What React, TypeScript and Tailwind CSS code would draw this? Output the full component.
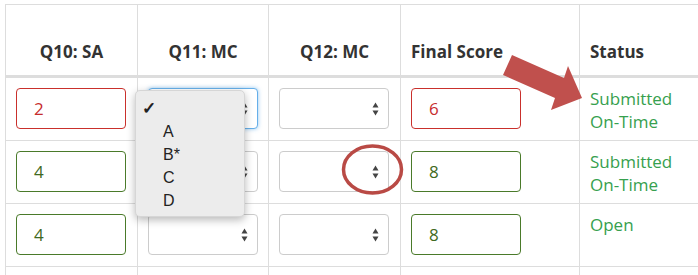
import React from 'react';

type Row = {
  q10: { value: string; tone: 'error' | 'ok' };
  q11Focused?: boolean;
  final: { value: string; tone: 'error' | 'ok' };
  status: string[];
};

const rows: Row[] = [
  { q10: { value: '2', tone: 'error' }, q11Focused: true, final: { value: '6', tone: 'error' }, status: ['Submitted', 'On-Time'] },
  { q10: { value: '4', tone: 'ok' }, final: { value: '8', tone: 'ok' }, status: ['Submitted', 'On-Time'] },
  { q10: { value: '4', tone: 'ok' }, final: { value: '8', tone: 'ok' }, status: ['Open'] },
];

function ScoreInput({ value, tone }: { value: string; tone: 'error' | 'ok' }) {
  const cls =
    tone === 'error'
      ? 'border-[#c9302c] text-[#c62d2d]'
      : 'border-[#4a7a2a] text-[#3f6a22]';
  return (
    <div className={`w-[110px] h-[41px] rounded-[4px] border bg-white flex items-center pl-[17px] text-[17px] ${cls}`}>
      {value}
    </div>
  );
}

function SelectArrows() {
  return (
    <svg width="7" height="14" viewBox="0 0 7 14" className="shrink-0">
      <path d="M3.5 0.5 L6.5 5.5 L0.5 5.5 Z" fill="#444" />
      <path d="M3.5 13.5 L6.5 8.5 L0.5 8.5 Z" fill="#444" />
    </svg>
  );
}

function FakeSelect({ focused }: { focused?: boolean }) {
  const cls = focused
    ? 'border-[#66afe9] shadow-[0_0_4px_rgba(102,175,233,0.7)]'
    : 'border-[#cccccc]';
  return (
    <div className={`w-[110px] h-[41px] rounded-[4px] border bg-white flex items-center justify-end pr-[9px] ${cls}`}>
      <SelectArrows />
    </div>
  );
}

function OptionMenu() {
  const items = ['', 'A', 'B*', 'C', 'D'];
  return (
    <div className="absolute left-[135px] top-[90px] w-[110px] h-[127px] rounded-[5px] bg-[#ececec] border border-[#d6d6d6] shadow-[0_3px_9px_rgba(0,0,0,0.28)] py-[6px] font-['Liberation_Sans',Arial,sans-serif] text-[16px] text-[#222]">
      {items.map((label, i) => (
        <div key={i} className="h-[23px] flex items-center">
          <span className="w-[27px] pl-[6px] text-[17px] font-bold leading-none">{i === 0 ? '✓' : ''}</span>
          <span>{label}</span>
        </div>
      ))}
    </div>
  );
}

function Annotations() {
  return (
    <svg className="absolute left-0 top-0 pointer-events-none" width="698" height="275" viewBox="0 0 698 275">
      <polygon
        points="512,55 564,78 568,66 582,98 551,110 555,98 503,75"
        fill="#c0504d"
      />
      <ellipse cx="372.5" cy="169.5" rx="29" ry="23.5" fill="none" stroke="#b94a45" strokeWidth="3.5" />
    </svg>
  );
}

const cellBase = 'border-r border-[#dddddd] px-[10px]';

export default function App() {
  return (
    <div className="relative w-[698px] h-[275px] overflow-hidden bg-white font-['Open_Sans',sans-serif]">
      <div className="pl-[5px] pt-[4px]">
        <div className="grid grid-cols-[132px_131px_132px_179px_160px] w-max border-l border-t border-[#dddddd]">
          {/* Header */}
          {['Q10: SA', 'Q11: MC', 'Q12: MC'].map(h => (
            <div key={h} className={`${cellBase} h-[73px] border-b-[3px] flex items-end justify-center pb-[12px] text-[17px] leading-[22px] font-bold text-[#333]`}>
              {h}
            </div>
          ))}
          {['Final Score', 'Status'].map(h => (
            <div key={h} className={`${cellBase} h-[73px] border-b-[3px] flex items-end pb-[12px] text-[17px] leading-[22px] font-bold text-[#333]`}>
              {h}
            </div>
          ))}

          {/* Body */}
          {rows.map((r, i) => (
            <React.Fragment key={i}>
              <div className={`${cellBase} h-[63px] border-b pt-[10px]`}>
                <ScoreInput {...r.q10} />
              </div>
              <div className={`${cellBase} h-[63px] border-b pt-[10px]`}>
                <FakeSelect focused={r.q11Focused} />
              </div>
              <div className={`${cellBase} h-[63px] border-b pt-[10px]`}>
                <FakeSelect />
              </div>
              <div className={`${cellBase} h-[63px] border-b pt-[10px]`}>
                <ScoreInput {...r.final} />
              </div>
              <div className={`${cellBase} h-[63px] border-b pt-[9px] text-[17px] leading-[23px] text-[#36a04e]`}>
                {r.status.map(s => (
                  <div key={s}>{s}</div>
                ))}
              </div>
            </React.Fragment>
          ))}

          {/* Partial next row */}
          {[0, 1, 2, 3, 4].map(k => (
            <div key={k} className={`${cellBase} h-[40px] border-b`} />
          ))}
        </div>
      </div>

      <OptionMenu />
      <Annotations />
    </div>
  );
}
